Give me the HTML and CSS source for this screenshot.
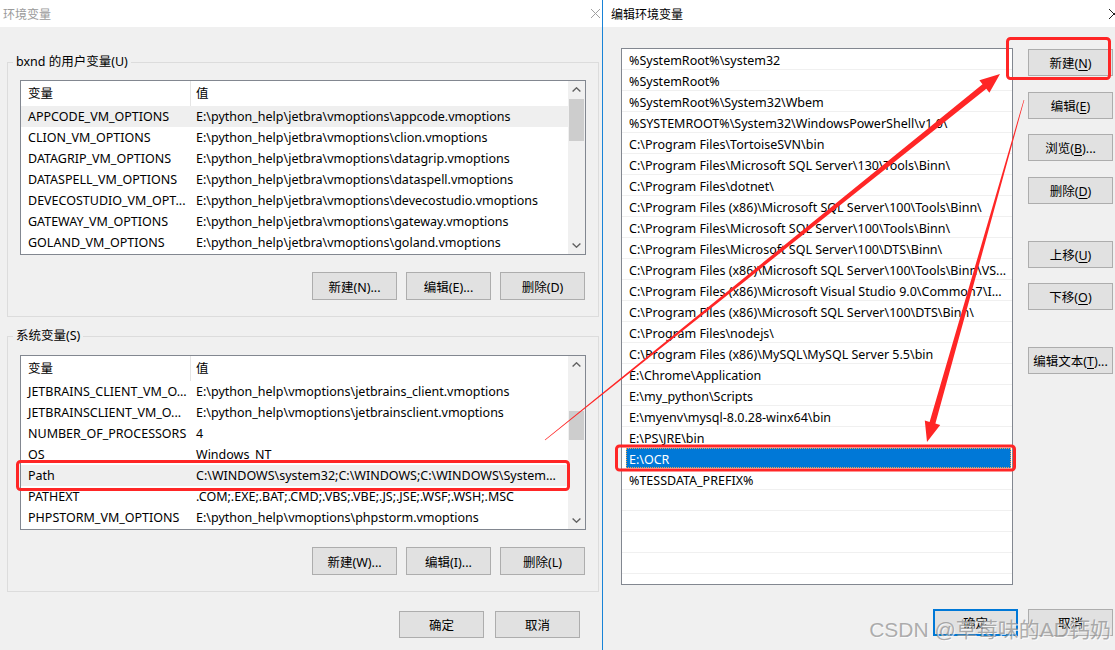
FILE: index.html
```html
<!DOCTYPE html>
<html lang="zh-CN">
<head>
    <meta charset="UTF-8">
    <title>环境变量</title>
    <link rel="stylesheet" href="styles.css">
</head>
<body>
    <div class="screen">
        <!-- 环境变量 dialog (inactive, behind) -->
        <div class="win win-env">
            <div class="titlebar">
                <span class="title">环境变量</span>
                <svg class="close" width="9" height="9" viewBox="0 0 9 9"><path d="M0 0L9 9M9 0L0 9" stroke="#a0a0a0" stroke-width="1"/></svg>
            </div>

            <fieldset class="group">
                <legend>bxnd 的用户变量(U)</legend>
                <div class="listview">
                    <div class="lv-main">
                        <div class="lv-head"><span class="c-name">变量</span><span class="c-val">值</span></div>
                        <div class="lv-row hot"><span class="c-name">APPCODE_VM_OPTIONS</span><span class="c-val">E:\python_help\jetbra\vmoptions\appcode.vmoptions</span></div>
                        <div class="lv-row"><span class="c-name">CLION_VM_OPTIONS</span><span class="c-val">E:\python_help\jetbra\vmoptions\clion.vmoptions</span></div>
                        <div class="lv-row"><span class="c-name">DATAGRIP_VM_OPTIONS</span><span class="c-val">E:\python_help\jetbra\vmoptions\datagrip.vmoptions</span></div>
                        <div class="lv-row"><span class="c-name">DATASPELL_VM_OPTIONS</span><span class="c-val">E:\python_help\jetbra\vmoptions\dataspell.vmoptions</span></div>
                        <div class="lv-row"><span class="c-name">DEVECOSTUDIO_VM_OPT...</span><span class="c-val">E:\python_help\jetbra\vmoptions\devecostudio.vmoptions</span></div>
                        <div class="lv-row"><span class="c-name">GATEWAY_VM_OPTIONS</span><span class="c-val">E:\python_help\jetbra\vmoptions\gateway.vmoptions</span></div>
                        <div class="lv-row"><span class="c-name">GOLAND_VM_OPTIONS</span><span class="c-val">E:\python_help\jetbra\vmoptions\goland.vmoptions</span></div>
                    </div>
                    <div class="vscroll">
                        <div class="sb-arrow"><svg width="9" height="5" viewBox="0 0 9 5"><path d="M0.6 4.4L4.5 0.8L8.4 4.4" fill="none" stroke="#606060" stroke-width="1.4"/></svg></div>
                        <div class="sb-track"><div class="sb-thumb thumb-user"></div></div>
                        <div class="sb-arrow"><svg width="9" height="5" viewBox="0 0 9 5"><path d="M0.6 0.6L4.5 4.2L8.4 0.6" fill="none" stroke="#606060" stroke-width="1.4"/></svg></div>
                    </div>
                </div>
                <div class="btn-row">
                    <button class="btn">新建(N)...</button>
                    <button class="btn">编辑(E)...</button>
                    <button class="btn">删除(D)</button>
                </div>
            </fieldset>

            <fieldset class="group group-sys">
                <legend>系统变量(S)</legend>
                <div class="listview">
                    <div class="lv-main">
                        <div class="lv-head"><span class="c-name">变量</span><span class="c-val">值</span></div>
                        <div class="lv-row"><span class="c-name">JETBRAINS_CLIENT_VM_O...</span><span class="c-val">E:\python_help\vmoptions\jetbrains_client.vmoptions</span></div>
                        <div class="lv-row"><span class="c-name">JETBRAINSCLIENT_VM_O...</span><span class="c-val">E:\python_help\vmoptions\jetbrainsclient.vmoptions</span></div>
                        <div class="lv-row"><span class="c-name">NUMBER_OF_PROCESSORS</span><span class="c-val">4</span></div>
                        <div class="lv-row"><span class="c-name">OS</span><span class="c-val">Windows_NT</span></div>
                        <div class="lv-row hot"><span class="c-name">Path</span><span class="c-val">C:\WINDOWS\system32;C:\WINDOWS;C:\WINDOWS\System...</span></div>
                        <div class="lv-row"><span class="c-name">PATHEXT</span><span class="c-val">.COM;.EXE;.BAT;.CMD;.VBS;.VBE;.JS;.JSE;.WSF;.WSH;.MSC</span></div>
                        <div class="lv-row"><span class="c-name">PHPSTORM_VM_OPTIONS</span><span class="c-val">E:\python_help\vmoptions\phpstorm.vmoptions</span></div>
                    </div>
                    <div class="vscroll">
                        <div class="sb-arrow"><svg width="9" height="5" viewBox="0 0 9 5"><path d="M0.6 4.4L4.5 0.8L8.4 4.4" fill="none" stroke="#606060" stroke-width="1.4"/></svg></div>
                        <div class="sb-track"><div class="sb-thumb thumb-sys"></div></div>
                        <div class="sb-arrow"><svg width="9" height="5" viewBox="0 0 9 5"><path d="M0.6 0.6L4.5 4.2L8.4 0.6" fill="none" stroke="#606060" stroke-width="1.4"/></svg></div>
                    </div>
                </div>
                <div class="btn-row">
                    <button class="btn">新建(W)...</button>
                    <button class="btn">编辑(I)...</button>
                    <button class="btn">删除(L)</button>
                </div>
            </fieldset>

            <div class="dlg-buttons">
                <button class="btn">确定</button>
                <button class="btn">取消</button>
            </div>
        </div>

        <!-- 编辑环境变量 dialog (active) -->
        <div class="win win-edit">
            <div class="titlebar">
                <span class="title">编辑环境变量</span>
                <svg class="close" width="10" height="10" viewBox="0 0 10 10"><path d="M0 0L10 10M10 0L0 10" stroke="#222" stroke-width="1"/></svg>
            </div>
            <div class="edit-body">
                <div class="pathlist">
                    <div class="path-row"><span>%SystemRoot%\system32</span></div>
                    <div class="path-row"><span>%SystemRoot%</span></div>
                    <div class="path-row"><span>%SystemRoot%\System32\Wbem</span></div>
                    <div class="path-row"><span>%SYSTEMROOT%\System32\WindowsPowerShell\v1.0\</span></div>
                    <div class="path-row"><span>C:\Program Files\TortoiseSVN\bin</span></div>
                    <div class="path-row"><span>C:\Program Files\Microsoft SQL Server\130\Tools\Binn\</span></div>
                    <div class="path-row"><span>C:\Program Files\dotnet\</span></div>
                    <div class="path-row"><span>C:\Program Files (x86)\Microsoft SQL Server\100\Tools\Binn\</span></div>
                    <div class="path-row"><span>C:\Program Files\Microsoft SQL Server\100\Tools\Binn\</span></div>
                    <div class="path-row"><span>C:\Program Files\Microsoft SQL Server\100\DTS\Binn\</span></div>
                    <div class="path-row"><span>C:\Program Files (x86)\Microsoft SQL Server\100\Tools\Binn\VS...</span></div>
                    <div class="path-row"><span>C:\Program Files (x86)\Microsoft Visual Studio 9.0\Common7\I...</span></div>
                    <div class="path-row"><span>C:\Program Files (x86)\Microsoft SQL Server\100\DTS\Binn\</span></div>
                    <div class="path-row"><span>C:\Program Files\nodejs\</span></div>
                    <div class="path-row"><span>C:\Program Files (x86)\MySQL\MySQL Server 5.5\bin</span></div>
                    <div class="path-row"><span>E:\Chrome\Application</span></div>
                    <div class="path-row"><span>E:\my_python\Scripts</span></div>
                    <div class="path-row"><span>E:\myenv\mysql-8.0.28-winx64\bin</span></div>
                    <div class="path-row"><span>E:\PS\JRE\bin</span></div>
                    <div class="path-row sel"><span>E:\OCR</span></div>
                    <div class="path-row"><span>%TESSDATA_PREFIX%</span></div>
                    <div class="path-row"><span></span></div>
                    <div class="path-row"><span></span></div>
                    <div class="path-row"><span></span></div>
                    <div class="path-row"><span></span></div>
                    <div class="path-row"><span></span></div>
                </div>
                <div class="side-buttons">
                    <button class="btn">新建(<u>N</u>)</button>
                    <button class="btn">编辑(<u>E</u>)</button>
                    <button class="btn">浏览(<u>B</u>)...</button>
                    <button class="btn">删除(<u>D</u>)</button>
                    <button class="btn spaced">上移(<u>U</u>)</button>
                    <button class="btn">下移(<u>O</u>)</button>
                    <button class="btn spaced">编辑文本(<u>T</u>)...</button>
                </div>
            </div>
            <div class="edit-foot">
                <button class="btn default">确定</button>
                <button class="btn">取消</button>
            </div>
        </div>

        <!-- red annotations drawn over both dialogs -->
        <svg class="marks" width="1115" height="650" viewBox="0 0 1115 650">
            <g fill="none" stroke="#ff2626" stroke-width="3">
                <rect x="17.5" y="461.5" width="551" height="28" rx="3"/>
                <rect x="1007.5" y="38.5" width="102" height="40" rx="3"/>
                <rect x="616.5" y="446" width="398" height="24" rx="3"/>
            </g>
            <g fill="#ff2626">
                <polygon points="545.2,440.2 986.3,88.8 989.4,92.7 1000,74 979.4,80.3 982.5,84.2 544.8,439.8"/>
                <polygon points="1024.3,100.1 935.4,423.6 940.2,425 927,442 924.8,420.6 929.6,422 1023.7,99.9"/>
            </g>
        </svg>

        <div class="watermark">CSDN @草莓味的AD钙奶</div>
    </div>
</body>
</html>
```

FILE: styles.css
```css
* {
    box-sizing: border-box;
}

body {
    margin: 0;
    width: 1115px;
    height: 650px;
    overflow: hidden;
    background-color: #f0f0f0;
    color: #000;
    font-family: "Noto Sans", "Noto Sans CJK SC", sans-serif;
    font-size: 12.5px;
}

.screen {
    position: relative;
    display: flex;
    height: 650px;
}

.win {
    display: flex;
    flex-direction: column;
    background-color: #f0f0f0;
}

.win-env {
    width: 602px;
    flex: none;
}

.win-edit {
    flex: 1;
    border-left: 1px solid #1883d7;
}

.titlebar {
    flex: none;
    height: 27px;
    display: flex;
    align-items: center;
    padding-left: 3px;
    background-color: #fff;
    font-size: 12px;
}

.win-env .titlebar {
    color: #9a9a9a;
}

.win-edit .titlebar {
    padding-left: 8px;
}

.close {
    margin-left: auto;
    margin-right: 2px;
}

.win-edit .close {
    margin-right: -4px;
}

/* group boxes */
.group {
    width: 592px;
    margin: 27px 0 0 7px;
    padding: 10px 12px 16px 12px;
    border: 1px solid #dcdcdc;
    min-width: 0;
}

.group legend {
    margin-left: -7px;
    padding: 0 3px;
    line-height: 16px;
}

.group-sys {
    margin-top: 11px;
    padding-top: 11px;
}

/* list views */
.listview {
    display: flex;
    height: 175px;
    border: 1px solid #828790;
    background-color: #fff;
}

.lv-main {
    flex: 1;
    min-width: 0;
    overflow: hidden;
}

.lv-head, .lv-row {
    display: grid;
    grid-template-columns: 169px 1fr;
    white-space: nowrap;
}

.lv-head {
    height: 25px;
    line-height: 25px;
}

.lv-head .c-name {
    padding-left: 7px;
}

.lv-head .c-val {
    padding-left: 5px;
    border-left: 1px solid #e5e5e5;
}

.lv-row {
    height: 21px;
    line-height: 21px;
}

.lv-row span {
    overflow: hidden;
}

.lv-row .c-name {
    padding-left: 7px;
}

.lv-row .c-val {
    padding-left: 6px;
}

.lv-row.hot {
    background-color: #efefef;
}

.vscroll {
    flex: none;
    width: 17px;
    display: flex;
    flex-direction: column;
    background-color: #f0f0f0;
}

.sb-arrow {
    height: 17px;
    display: flex;
    align-items: center;
    justify-content: center;
}

.sb-track {
    flex: 1;
}

.sb-thumb {
    margin: 0 1px;
    background-color: #cdcdcd;
}

.thumb-user {
    margin-top: 1px;
    height: 42px;
}

.thumb-sys {
    margin-top: 38px;
    height: 29px;
}

/* buttons */
.btn {
    width: 85px;
    height: 28px;
    padding: 0;
    border: 1px solid #adadad;
    background-color: #e1e1e1;
    color: #000;
    font: inherit;
    text-align: center;
    white-space: nowrap;
}

.btn u {
    text-underline-offset: 2px;
}

.btn-row {
    display: flex;
    justify-content: flex-end;
    gap: 9px;
    margin-top: 17px;
    margin-right: 1px;
}

.dlg-buttons {
    display: flex;
    justify-content: flex-end;
    gap: 11px;
    margin: 19px 22px 0 0;
}

.dlg-buttons .btn {
    height: 27px;
}

/* edit dialog */
.edit-body {
    display: flex;
    gap: 15px;
    padding: 21px 2px 0 18px;
}

.pathlist {
    width: 392px;
    height: 537px;
    border: 1px solid #828790;
    background-color: #fff;
    overflow: hidden;
}

.path-row {
    height: 21px;
    padding-left: 4px;
    border-bottom: 1px solid #f0f0f0;
    white-space: nowrap;
}

.path-row span {
    display: block;
    height: 20px;
    padding-left: 3px;
    line-height: 24px;
}

.path-row.sel span {
    margin-right: 1px;
    background-color: #0078d7;
    color: #fff;
    outline: 1px dotted #f3a64c;
    outline-offset: -1px;
}

.side-buttons {
    flex: none;
    width: 85px;
    display: flex;
    flex-direction: column;
    padding-top: 1px;
}

.side-buttons .btn {
    height: 27px;
}

.side-buttons .btn + .btn {
    margin-top: 15.5px;
}

.side-buttons .btn.spaced {
    margin-top: 37px;
}

.edit-foot {
    display: flex;
    justify-content: flex-end;
    gap: 10px;
    margin-top: 24px;
    padding-right: 2px;
}

.edit-foot .btn {
    height: 27px;
}

.btn.default {
    border: 2px solid #0078d7;
}

/* overlays */
.marks {
    position: absolute;
    top: 0;
    left: 0;
    pointer-events: none;
}

.watermark {
    position: absolute;
    right: 4px;
    top: 617px;
    font-family: "Liberation Sans", "Noto Sans CJK SC", sans-serif;
    font-size: 21px;
    line-height: 26px;
    color: rgba(140, 140, 140, 0.7);
    text-shadow: 1px 1px 0 rgba(255, 255, 255, 0.7);
    pointer-events: none;
}
```
